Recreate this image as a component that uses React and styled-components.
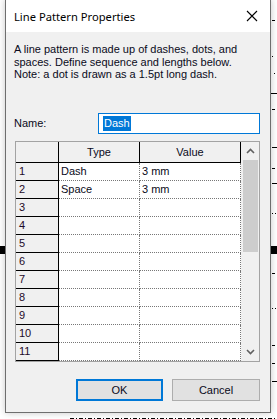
import React from 'react'
import styled, { createGlobalStyle } from 'styled-components'

const Global = createGlobalStyle`
  html, body { margin: 0; padding: 0; background: #ffffff; }
  body { width: 277px; height: 419px; overflow: hidden; }
`

const Page = styled.div`
  position: relative;
  width: 277px;
  height: 419px;
  overflow: hidden;
  background: #ffffff;
  font-family: 'Liberation Sans', Arial, sans-serif;
`

const Canvas = styled.svg`
  position: absolute;
  left: 0;
  top: 0;
`

const Window = styled.div`
  position: absolute;
  left: 5px;
  top: -1px;
  width: 266px;
  height: 414px;
  box-sizing: border-box;
  border: 1px solid #6e6e6e;
  background: #f0f0f0;
  box-shadow: 0 0 7px rgba(0, 0, 0, 0.22);
  display: flex;
  flex-direction: column;
`

const TitleBar = styled.div`
  height: 32px;
  background: #ffffff;
  display: flex;
  align-items: center;
  justify-content: space-between;
  padding: 0 0 0 8px;
  box-sizing: border-box;
`

const Title = styled.span`
  font-family: 'Noto Sans', 'Open Sans', sans-serif;
  font-size: 11.2px;
  color: #000;
  padding-top: 1px;
`

const Close = styled.div`
  width: 36px;
  height: 32px;
  display: flex;
  align-items: center;
  justify-content: center;
`

const Body = styled.div`
  flex: 1;
  display: flex;
  flex-direction: column;
  padding: 11px 10px 0 8px;
`

const Intro = styled.p`
  margin: 0;
  font-size: 11px;
  line-height: 12.5px;
  color: #0a0a20;
`

const NameRow = styled.div`
  display: flex;
  align-items: center;
  margin-top: 32px;
  height: 21px;
`

const Label = styled.span`
  font-size: 11px;
  color: #0a0a20;
  width: 84px;
`

const Field = styled.div`
  flex: 1;
  height: 21px;
  box-sizing: border-box;
  border: 1px solid #0078d7;
  background: #fff;
  display: flex;
  align-items: center;
  padding-left: 4px;
  font-size: 11px;
`

const Selected = styled.span`
  background: #0078d7;
  color: #fff;
  padding: 1px 1px;
  line-height: 13px;
`

const GridBox = styled.div`
  margin: 7px 0 0 1px;
  height: 221px;
  box-sizing: border-box;
  border: 1px solid #a3a3a3;
  background: #fff;
  display: flex;
`

const Rows = styled.div`
  display: flex;
  flex-direction: column;
  width: 225px;
`

const Row = styled.div`
  display: grid;
  grid-template-columns: 43px 81px 101px;
  height: ${p => (p.$head ? 21 : 18)}px;
`

const Cell = styled.div`
  box-sizing: border-box;
  font-size: 11px;
  color: #0a0a20;
  display: flex;
  align-items: center;
  white-space: nowrap;
  padding-left: ${p => (p.$center ? 0 : 2)}px;
  justify-content: ${p => (p.$center ? 'center' : 'flex-start')};
  background: ${p => (p.$gray ? '#f0f0f0' : '#ffffff')};
  border-right: 1px ${p => (p.$solid ? 'solid #000' : 'dotted #777')};
  border-bottom: 1px ${p => (p.$solidBottom ? 'solid #000' : 'dotted #777')};
`

const RowNum = styled(Cell)`
  padding-left: 3px;
  color: #1e0a28;
`

const Scroll = styled.div`
  width: 18px;
  background: #f0f0f0;
  display: flex;
  flex-direction: column;
  align-items: center;
`

const Arrow = styled.div`
  height: 18px;
  width: 100%;
  display: flex;
  align-items: center;
  justify-content: center;
`

const Track = styled.div`
  flex: 1;
  width: 100%;
  display: flex;
  flex-direction: column;
  align-items: center;
`

const Thumb = styled.div`
  width: 15px;
  height: 92px;
  background: #cdcdcd;
`

const Buttons = styled.div`
  display: flex;
  justify-content: flex-end;
  gap: 9px;
  margin-top: 17px;
`

const Button = styled.button`
  width: ${p => (p.$w || 87)}px;
  height: 22px;
  box-sizing: border-box;
  background: #e1e1e1;
  border: ${p => (p.$primary ? '2px solid #0078d7' : '1px solid #adadad')};
  font-family: 'Liberation Sans', Arial, sans-serif;
  font-size: 11px;
  color: #0a0a20;
  padding: 0;
`

const Chevron = ({ up }) => (
  <svg width="9" height="6" viewBox="0 0 9 6">
    <path
      d={up ? 'M1 5 L4.5 1.5 L8 5' : 'M1 1 L4.5 4.5 L8 1'}
      fill="none"
      stroke="#606060"
      strokeWidth="1.6"
    />
  </svg>
)

const data = [
  ['Dash', '3 mm'],
  ['Space', '3 mm'],
]

const Backdrop = () => (
  <Canvas width="277" height="419">
    <g stroke="#000" strokeWidth="1" shapeRendering="crispEdges">
      <line x1="272" y1="20.5" x2="275" y2="20.5" />
      <line x1="272" y1="56.5" x2="274" y2="56.5" strokeDasharray="1 2" />
      <line x1="274" y1="73.5" x2="275" y2="73.5" />
      <line x1="270" y1="93.5" x2="277" y2="93.5" />
      <line x1="272" y1="109.5" x2="277" y2="109.5" strokeDasharray="3 2" />
      <line x1="272" y1="147.5" x2="277" y2="147.5" />
      <line x1="272" y1="168.5" x2="277" y2="168.5" strokeDasharray="3 2" />
      <line x1="272" y1="183.5" x2="277" y2="183.5" />
      <line x1="272" y1="213.5" x2="277" y2="213.5" strokeDasharray="1 2" />
      <line x1="272" y1="273.5" x2="277" y2="273.5" strokeDasharray="3 2" />
      <line x1="272" y1="308.5" x2="277" y2="308.5" strokeDasharray="1 2" />
      <line x1="272" y1="345.5" x2="277" y2="345.5" strokeDasharray="3 2" />
      <line x1="272" y1="363.5" x2="277" y2="363.5" strokeDasharray="3 2" />
      <line x1="272" y1="381.5" x2="277" y2="381.5" />
      <line x1="70" y1="418.5" x2="277" y2="418.5" strokeDasharray="4 2 1 2" />
    </g>
    <rect x="0" y="246" width="5" height="8" fill="#000" />
    <rect x="271" y="246" width="6" height="8" fill="#000" />
  </Canvas>
)

export default function App() {
  const rows = Array.from({ length: 11 }, (_, i) => data[i] || ['', ''])
  return (
    <Page>
      <Global />
      <Backdrop />
      <Window>
        <TitleBar>
          <Title>Line Pattern Properties</Title>
          <Close>
            <svg width="12" height="12" viewBox="0 0 12 12">
              <path d="M1 1 L11 11 M11 1 L1 11" stroke="#000" strokeWidth="1.1" />
            </svg>
          </Close>
        </TitleBar>
        <Body>
          <Intro>
            A line pattern is made up of dashes, dots, and
            <br />
            spaces. Define sequence and lengths below.
            <br />
            Note: a dot is drawn as a 1.5pt long dash.
          </Intro>
          <NameRow>
            <Label>Name:</Label>
            <Field>
              <Selected>Dash</Selected>
            </Field>
          </NameRow>
          <GridBox>
            <Rows>
              <Row $head>
                <Cell $gray $solid $solidBottom />
                <Cell $gray $solid $solidBottom $center>Type</Cell>
                <Cell $gray $solid $solidBottom $center>Value</Cell>
              </Row>
              {rows.map((r, i) => (
                <Row key={i}>
                  <RowNum $gray $solid $solidBottom>{i + 1}</RowNum>
                  <Cell>{r[0]}</Cell>
                  <Cell>{r[1]}</Cell>
                </Row>
              ))}
            </Rows>
            <Scroll>
              <Arrow>
                <Chevron up />
              </Arrow>
              <Track>
                <Thumb />
              </Track>
              <Arrow>
                <Chevron />
              </Arrow>
            </Scroll>
          </GridBox>
          <Buttons>
            <Button $primary $w={87}>OK</Button>
            <Button $w={88}>Cancel</Button>
          </Buttons>
        </Body>
      </Window>
    </Page>
  )
}
